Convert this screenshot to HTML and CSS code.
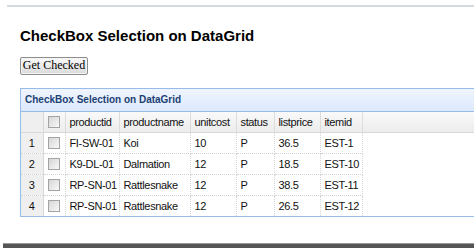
FILE: index.html
```html
<!DOCTYPE html>
<html lang="en">
<head>
    <meta charset="UTF-8">
    <title>CheckBox Selection on DataGrid</title>
    <link rel="stylesheet" href="styles.css">
</head>
<body>
    <div class="page">
        <h2>CheckBox Selection on DataGrid</h2>
        <div class="toolbar">
            <button class="btn">Get Checked</button>
        </div>
        <div class="panel">
            <div class="panel-header">CheckBox Selection on DataGrid</div>
            <table class="grid">
                <colgroup>
                    <col class="w-num">
                    <col class="w-ck">
                    <col class="w-id">
                    <col class="w-name">
                    <col class="w-cost">
                    <col class="w-status">
                    <col class="w-price">
                    <col class="w-item">
                    <col class="w-fill">
                </colgroup>
                <thead>
                    <tr>
                        <th class="rownum"></th>
                        <th class="ck"><span class="box"></span></th>
                        <th>productid</th>
                        <th>productname</th>
                        <th>unitcost</th>
                        <th>status</th>
                        <th>listprice</th>
                        <th>itemid</th>
                        <th class="filler"></th>
                    </tr>
                </thead>
                <tbody>
                    <tr>
                        <td class="rownum">1</td>
                        <td class="ck"><span class="box"></span></td>
                        <td>FI-SW-01</td>
                        <td>Koi</td>
                        <td>10</td>
                        <td>P</td>
                        <td>36.5</td>
                        <td>EST-1</td>
                        <td class="filler"></td>
                    </tr>
                    <tr>
                        <td class="rownum">2</td>
                        <td class="ck"><span class="box"></span></td>
                        <td>K9-DL-01</td>
                        <td>Dalmation</td>
                        <td>12</td>
                        <td>P</td>
                        <td>18.5</td>
                        <td>EST-10</td>
                        <td class="filler"></td>
                    </tr>
                    <tr>
                        <td class="rownum">3</td>
                        <td class="ck"><span class="box"></span></td>
                        <td>RP-SN-01</td>
                        <td>Rattlesnake</td>
                        <td>12</td>
                        <td>P</td>
                        <td>38.5</td>
                        <td>EST-11</td>
                        <td class="filler"></td>
                    </tr>
                    <tr>
                        <td class="rownum">4</td>
                        <td class="ck"><span class="box"></span></td>
                        <td>RP-SN-01</td>
                        <td>Rattlesnake</td>
                        <td>12</td>
                        <td>P</td>
                        <td>26.5</td>
                        <td>EST-12</td>
                        <td class="filler"></td>
                    </tr>
                </tbody>
            </table>
        </div>
    </div>
    <div class="bottom-bar"></div>
</body>
</html>
```

FILE: styles.css
```css
html, body {
    margin: 0;
    height: 100%;
    overflow: hidden;
    background-color: #fff;
}

body {
    display: flex;
    flex-direction: column;
    font-family: "Liberation Sans", Arial, sans-serif;
}

.page {
    flex: 1;
    margin-left: 7px;
    margin-top: 5px;
    padding-left: 13px;
    border-top: 2px solid #d5d9e0;
    width: 600px;
}

h2 {
    margin: 19px 0 0 0;
    font-size: 15px;
    font-weight: bold;
    line-height: 20px;
    color: #000;
}

.toolbar {
    margin-top: 9px;
    padding-bottom: 13px;
}

.btn {
    width: 68px;
    height: 18px;
    padding: 0;
    font-family: "Liberation Serif", "Times New Roman", serif;
    font-size: 12px;
    color: #000;
    background: linear-gradient(#fafafa, #dadada);
    border: 1px solid #8e8e8e;
    border-radius: 2px;
    box-shadow: inset 0 0 0 1px #f4f4f4;
}

.panel {
    width: 470px;
    border: 1px solid #99bbe8;
    border-right: none;
}

.panel-header {
    height: 22px;
    line-height: 22px;
    padding-left: 4px;
    font-size: 10px;
    font-weight: bold;
    color: #1c3f74;
    background: linear-gradient(#eff5ff, #dde9fb);
    border-bottom: 1px solid #99bbe8;
}

.grid {
    width: 470px;
    table-layout: fixed;
    border-collapse: collapse;
    font-size: 11px;
    letter-spacing: -0.35px;
    color: #111;
}

.w-num { width: 22px; }
.w-ck { width: 22px; }
.w-id { width: 54px; }
.w-name { width: 71px; }
.w-cost { width: 46px; }
.w-status { width: 38px; }
.w-price { width: 46px; }
.w-item { width: 42px; }
.w-fill { width: auto; }

.grid th,
.grid td {
    height: 20px;
    padding: 0 4px;
    text-align: left;
    font-weight: normal;
    white-space: nowrap;
    overflow: hidden;
    border-right: 1px dotted #d4d4d4;
    border-bottom: 1px dotted #d4d4d4;
}

.grid th {
    background: linear-gradient(#f9f9f9, #ececec);
    border-right: 1px solid #dcdcdc;
    border-bottom: 1px solid #d8d8d8;
}

.grid tbody tr:last-child td {
    border-bottom: none;
}

.grid .rownum {
    padding: 0;
    text-align: center;
    background: #efefef;
    border-right: 1px solid #d8d8d8;
}

.grid .ck {
    padding: 0;
    text-align: center;
}

.box {
    display: inline-block;
    width: 10px;
    height: 10px;
    vertical-align: middle;
    border: 1px solid #a3a3a3;
    background: linear-gradient(135deg, #d6d6d6, #f8f8f8);
}

.grid .filler {
    border-right: none;
    border-bottom: none;
    background: #fff;
}

.grid thead .filler {
    background: linear-gradient(#f9f9f9, #ececec);
    border-bottom: 1px solid #d8d8d8;
}

.bottom-bar {
    height: 4px;
    margin-left: 3px;
    background: #555;
    border-top: 1px solid #9a9a9a;
}
```
